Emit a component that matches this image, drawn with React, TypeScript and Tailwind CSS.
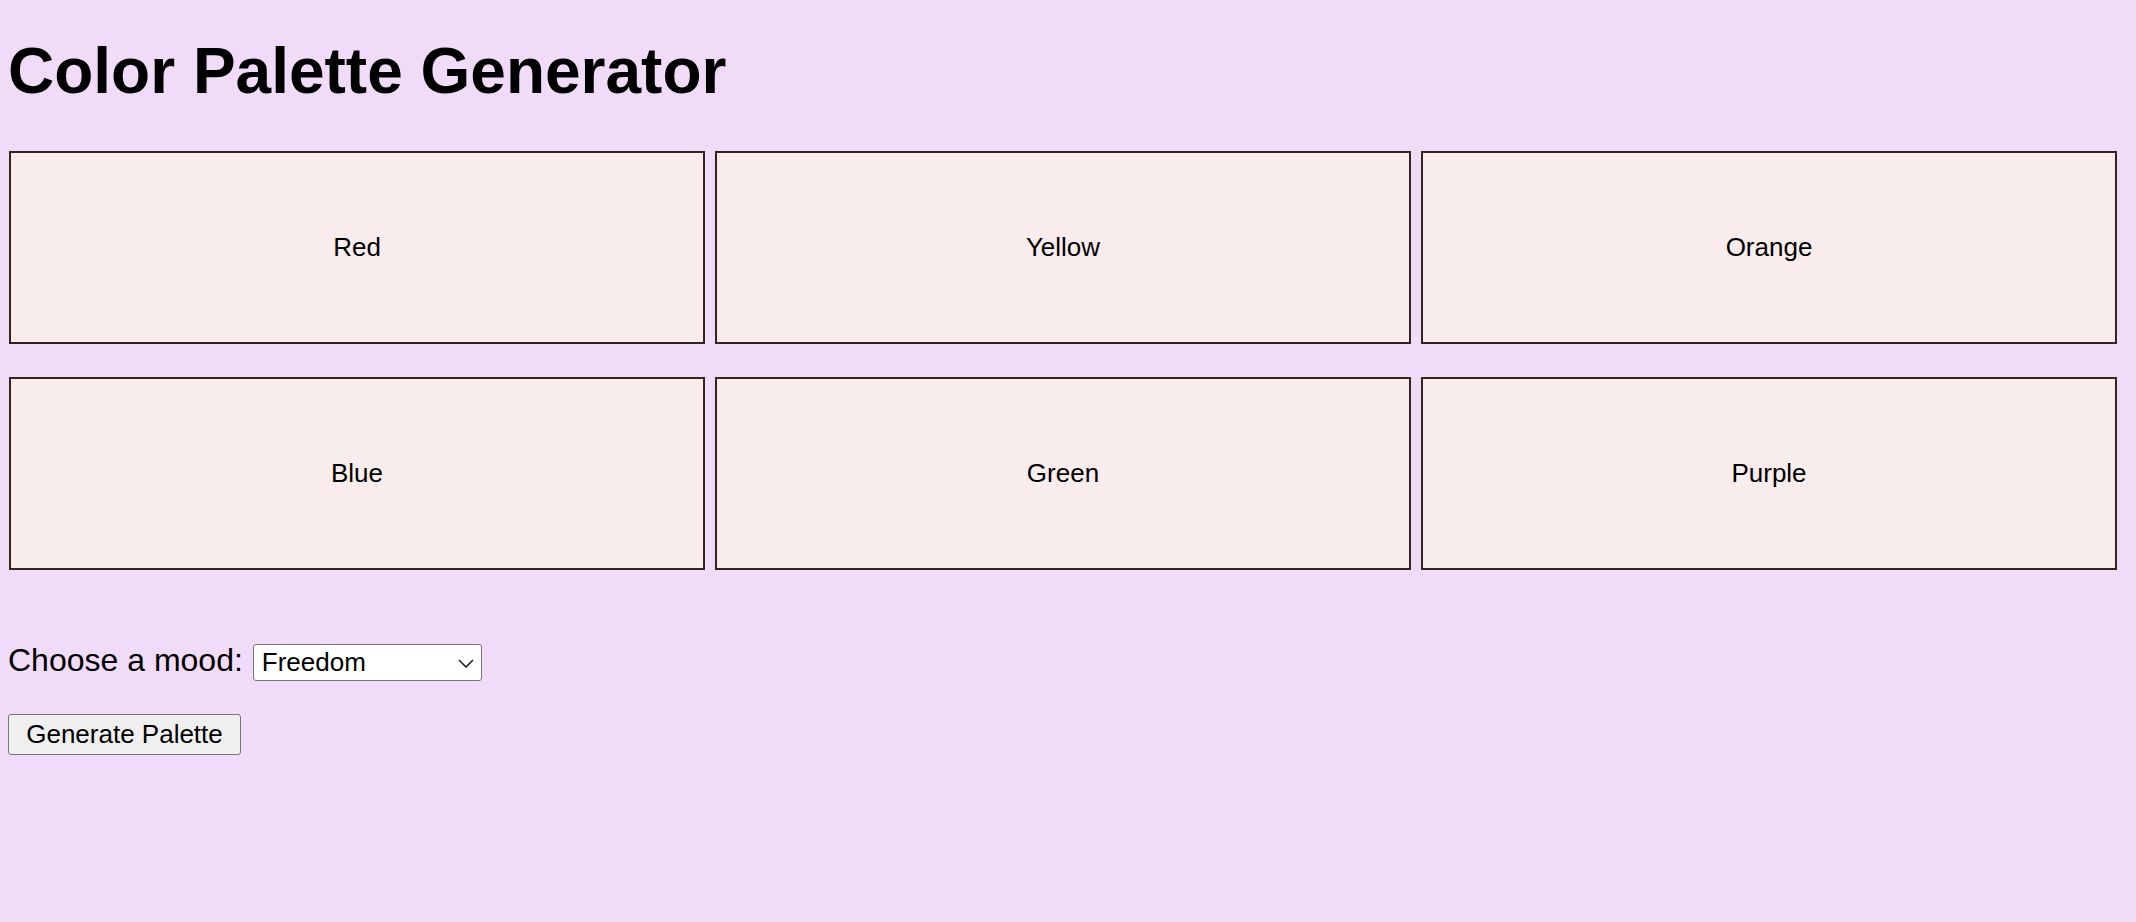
import { useState } from "react";

const COLORS = ["Red", "Yellow", "Orange", "Blue", "Green", "Purple"];
const MOODS = ["Freedom", "Calm", "Energy", "Passion", "Joy"];

export default function App() {
  const [mood, setMood] = useState("Freedom");

  return (
    <div className="min-h-[922px] bg-[#f0dcf9] pl-[8px] pt-[34px] font-['Liberation_Sans',Arial,sans-serif] text-black">
      <h1 className="text-[64px] font-bold leading-[74px]">Color Palette Generator</h1>

      <div className="ml-[1px] mt-[43px] grid w-[2108px] grid-cols-3 gap-x-[10px] gap-y-[33px]">
        {COLORS.map((name) => (
          <div
            key={name}
            className="flex h-[193px] items-center justify-center border-2 border-[#32261a] bg-[#f8ecec] text-[26px]"
          >
            {name}
          </div>
        ))}
      </div>

      <div className="mt-[72px] flex items-baseline gap-[10px]">
        <label htmlFor="mood" className="text-[32px] leading-[37px]">
          Choose a mood:
        </label>
        <span className="relative inline-flex">
          <select
            id="mood"
            value={mood}
            onChange={(e) => setMood(e.target.value)}
            className="h-[37px] w-[229px] appearance-none rounded-[3px] border border-[#767676] bg-white pl-[8px] text-[26px] leading-[35px] outline-none"
          >
            {MOODS.map((m) => (
              <option key={m}>{m}</option>
            ))}
          </select>
          <svg
            className="pointer-events-none absolute right-[8px] top-[15px]"
            width="16"
            height="9"
            viewBox="0 0 16 9"
            fill="none"
          >
            <path d="M1 1l7 7 7-7" stroke="#222" strokeWidth="1.6" />
          </svg>
        </span>
      </div>

      <button className="mt-[33px] flex h-[41px] w-[233px] items-center justify-center rounded-[3px] border border-[#767676] bg-[#efefef] text-[26px]">
        Generate Palette
      </button>
    </div>
  );
}
